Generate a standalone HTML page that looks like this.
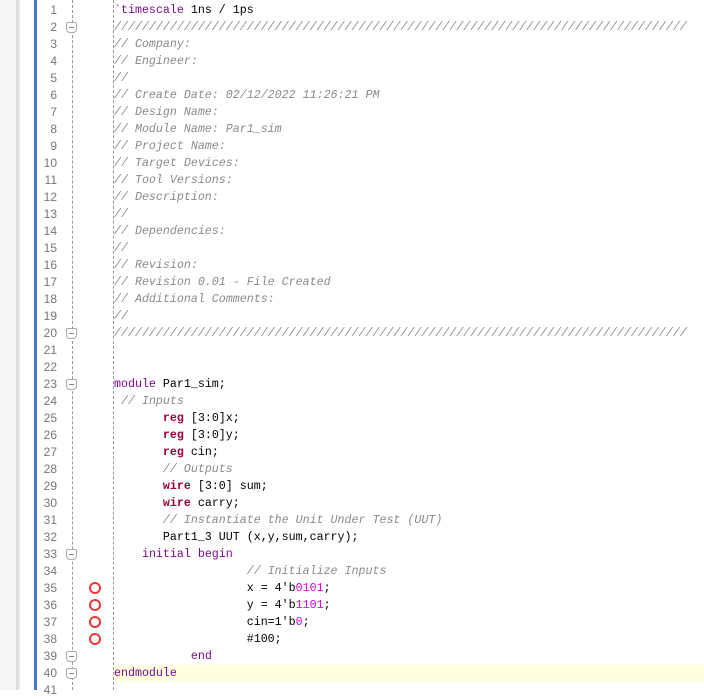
<!DOCTYPE html>
<html><head><style>
body{margin:0;width:704px;height:690px;overflow:hidden;background:#fff;position:relative;font-family:"Liberation Mono",monospace;}
.strip{position:absolute;left:0;top:0;width:16px;height:690px;background:#f6f6f6;}
.sep{position:absolute;left:16px;top:0;width:4px;height:690px;background:linear-gradient(90deg,#d8d8d8,#ececec);}
.blue{position:absolute;left:34px;top:0;width:3px;height:690px;background:#4a78c8;}
.d1{position:absolute;left:72px;top:0;height:690px;border-left:1px dashed #999;}
.d2{position:absolute;left:113px;top:0;height:690px;border-left:1px dashed #999;}
.hl{position:absolute;left:114px;top:665px;width:590px;height:17px;background:#ffffe0;}
.row{position:absolute;left:0;height:17px;line-height:17px;width:704px;font-size:11.65px;white-space:pre;}
.n{position:absolute;right:647px;color:#777;font-family:"Liberation Sans",sans-serif;font-size:12px;}
.c{position:absolute;left:114px;color:#000;}
.cm{color:#8a8a8a;font-style:italic;}
.k{color:#7a0b8c;}
.r{color:#99003a;font-weight:bold;}
.m{color:#e000e0;}
.f{position:absolute;left:66px;top:3px;width:9px;height:9px;border:1px solid #aaa;border-radius:2px 2px 4px 4px;background:#fff;}
.f:after{content:"";position:absolute;left:2px;top:4px;width:5px;height:1px;background:#888;}
.bp{position:absolute;left:89px;top:2px;width:8px;height:8px;border:2.5px solid #e83838;border-radius:50%;}
</style></head><body>
<div class="strip"></div><div class="sep"></div><div class="blue"></div>
<div class="hl"></div>
<div class="d1"></div><div class="d2"></div>
<div class="row" style="top:2px"><span class="n">1</span><span class="c"><span class="k">`timescale</span> 1ns / 1ps</span></div>
<div class="row" style="top:19px"><span class="n">2</span><span class="f"></span><span class="c cm">//////////////////////////////////////////////////////////////////////////////////</span></div>
<div class="row" style="top:36px"><span class="n">3</span><span class="c cm">// Company:</span></div>
<div class="row" style="top:53px"><span class="n">4</span><span class="c cm">// Engineer:</span></div>
<div class="row" style="top:70px"><span class="n">5</span><span class="c cm">//</span></div>
<div class="row" style="top:87px"><span class="n">6</span><span class="c cm">// Create Date: 02/12/2022 11:26:21 PM</span></div>
<div class="row" style="top:104px"><span class="n">7</span><span class="c cm">// Design Name:</span></div>
<div class="row" style="top:121px"><span class="n">8</span><span class="c cm">// Module Name: Par1_sim</span></div>
<div class="row" style="top:138px"><span class="n">9</span><span class="c cm">// Project Name:</span></div>
<div class="row" style="top:155px"><span class="n">10</span><span class="c cm">// Target Devices:</span></div>
<div class="row" style="top:172px"><span class="n">11</span><span class="c cm">// Tool Versions:</span></div>
<div class="row" style="top:189px"><span class="n">12</span><span class="c cm">// Description:</span></div>
<div class="row" style="top:206px"><span class="n">13</span><span class="c cm">//</span></div>
<div class="row" style="top:223px"><span class="n">14</span><span class="c cm">// Dependencies:</span></div>
<div class="row" style="top:240px"><span class="n">15</span><span class="c cm">//</span></div>
<div class="row" style="top:257px"><span class="n">16</span><span class="c cm">// Revision:</span></div>
<div class="row" style="top:274px"><span class="n">17</span><span class="c cm">// Revision 0.01 - File Created</span></div>
<div class="row" style="top:291px"><span class="n">18</span><span class="c cm">// Additional Comments:</span></div>
<div class="row" style="top:308px"><span class="n">19</span><span class="c cm">//</span></div>
<div class="row" style="top:325px"><span class="n">20</span><span class="f"></span><span class="c cm">//////////////////////////////////////////////////////////////////////////////////</span></div>
<div class="row" style="top:342px"><span class="n">21</span></div>
<div class="row" style="top:359px"><span class="n">22</span></div>
<div class="row" style="top:376px"><span class="n">23</span><span class="f"></span><span class="c"><span class="k">module</span> Par1_sim;</span></div>
<div class="row" style="top:393px"><span class="n">24</span><span class="c"> <span class="cm">// Inputs</span></span></div>
<div class="row" style="top:410px"><span class="n">25</span><span class="c">       <span class="r">reg</span> [3:0]x;</span></div>
<div class="row" style="top:427px"><span class="n">26</span><span class="c">       <span class="r">reg</span> [3:0]y;</span></div>
<div class="row" style="top:444px"><span class="n">27</span><span class="c">       <span class="r">reg</span> cin;</span></div>
<div class="row" style="top:461px"><span class="n">28</span><span class="c">       <span class="cm">// Outputs</span></span></div>
<div class="row" style="top:478px"><span class="n">29</span><span class="c">       <span class="r">wire</span> [3:0] sum;</span></div>
<div class="row" style="top:495px"><span class="n">30</span><span class="c">       <span class="r">wire</span> carry;</span></div>
<div class="row" style="top:512px"><span class="n">31</span><span class="c">       <span class="cm">// Instantiate the Unit Under Test (UUT)</span></span></div>
<div class="row" style="top:529px"><span class="n">32</span><span class="c">       Part1_3 UUT (x,y,sum,carry);</span></div>
<div class="row" style="top:546px"><span class="n">33</span><span class="f"></span><span class="c">    <span class="k">initial begin</span></span></div>
<div class="row" style="top:563px"><span class="n">34</span><span class="c">                   <span class="cm">// Initialize Inputs</span></span></div>
<div class="row" style="top:580px"><span class="n">35</span><span class="bp"></span><span class="c">                   x = 4'b<span class="m">0101</span>;</span></div>
<div class="row" style="top:597px"><span class="n">36</span><span class="bp"></span><span class="c">                   y = 4'b<span class="m">1101</span>;</span></div>
<div class="row" style="top:614px"><span class="n">37</span><span class="bp"></span><span class="c">                   cin=1'b<span class="m">0</span>;</span></div>
<div class="row" style="top:631px"><span class="n">38</span><span class="bp"></span><span class="c">                   #100;</span></div>
<div class="row" style="top:648px"><span class="n">39</span><span class="f"></span><span class="c">           <span class="k">end</span></span></div>
<div class="row" style="top:665px"><span class="n">40</span><span class="f"></span><span class="c"><span class="k">endmodule</span></span></div>
<div class="row" style="top:682px"><span class="n">41</span></div>
</body></html>
